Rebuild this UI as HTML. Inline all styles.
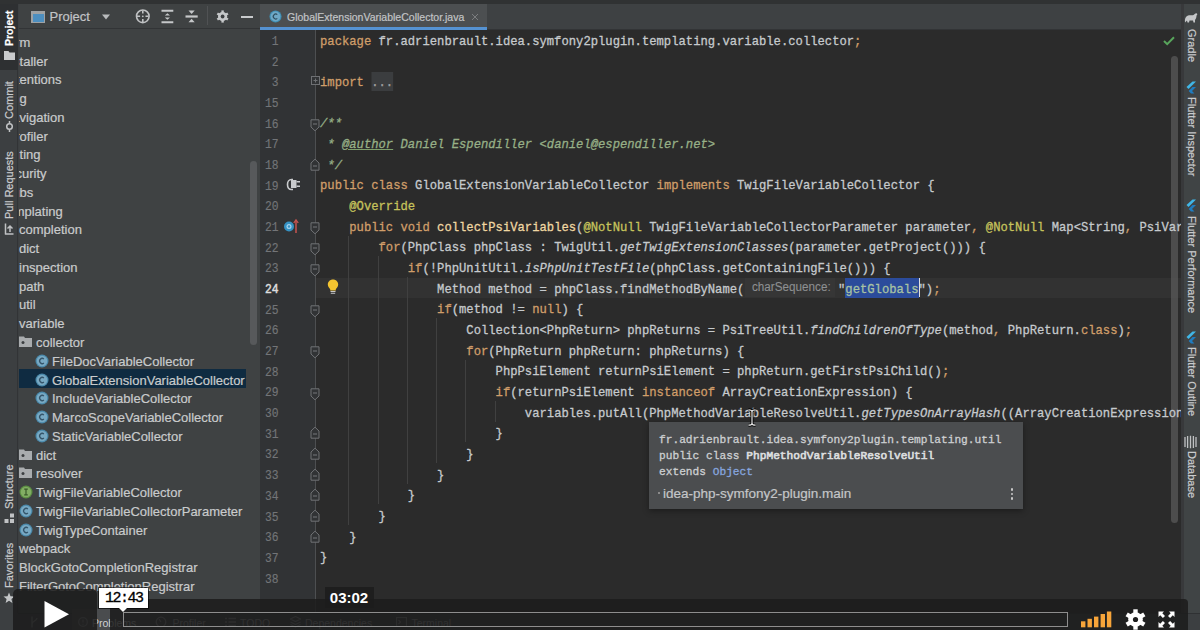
<!DOCTYPE html>
<html><head><meta charset="utf-8"><title>IDE video</title>
<style>
*{margin:0;padding:0;box-sizing:border-box}
html,body{width:1200px;height:630px;overflow:hidden;background:#3c3f41;font-family:"Liberation Sans",sans-serif;position:relative}
.abs{position:absolute}
#topstrip{position:absolute;left:0;top:0;width:1200px;height:4px;background:#303233}
#leftstrip{position:absolute;left:0;top:4px;width:18px;height:626px;background:#3c3f41;border-right:1px solid #323436}
#projtab{position:absolute;left:0;top:4px;width:18px;height:66px;background:#2e3032}
.vl{position:absolute;white-space:nowrap;font-size:11px;color:#c9cbcd;transform-origin:0 0;-webkit-text-stroke:0.2px currentColor}
.vl.up{transform:rotate(-90deg)}
.vl.down{transform:rotate(90deg)}
#projpanel{position:absolute;left:19px;top:4px;width:241px;height:626px;background:#3f4243;overflow:hidden}
#projhead{position:absolute;left:19px;top:4px;width:241px;height:25px;border-bottom:1px solid #323436}
.tt{position:absolute;font-size:13px;color:#c9cbcc;white-space:nowrap;line-height:16px;-webkit-text-stroke:0.2px currentColor}
.ti{position:absolute;line-height:0}
#treeclip{position:absolute;left:18.8px;top:30px;width:241px;height:600px;overflow:hidden}
#sel{position:absolute;left:19px;top:369px;width:227px;height:19.4px;background:#0f2b41}
#projscroll{position:absolute;left:249.5px;top:161px;width:7px;height:184px;border-radius:3.5px;background:#57595b}
#tabbar{position:absolute;left:260px;top:4px;width:921px;height:26px;background:#3e4143;border-bottom:1px solid #323436}
#tab{position:absolute;left:260px;top:4px;width:227px;height:26px;background:#4c4f51}
#tabline{position:absolute;left:260px;top:26.5px;width:227px;height:3px;background:#5592d2}
#gutter{position:absolute;left:260px;top:30px;width:55px;height:600px;background:#313335}
#gline{position:absolute;left:314.5px;top:30px;width:1px;height:600px;background:#4d4f51}
#editor{position:absolute;left:315px;top:30px;width:866px;height:600px;background:#2b2b2b;overflow:hidden}
#curline{position:absolute;left:260px;top:277.5px;width:921px;height:20.7px;background:#323232}
#curline2{position:absolute;left:260px;top:277.5px;width:55px;height:20.7px;background:#313335}
.ln{position:absolute;left:238px;width:40.5px;text-align:right;font-family:"Liberation Mono",monospace;font-size:13px;line-height:20.67px;color:#737578;white-space:nowrap;margin-top:3.1px;transform:scaleX(0.87);transform-origin:100% 0;-webkit-text-stroke:0.15px currentColor}
.ln.cur{color:#dcdcdc;-webkit-text-stroke:0.5px currentColor}
#codeclip{position:absolute;left:315px;top:30px;width:866px;height:600px;overflow:hidden}
.cl{position:absolute;font-family:"Liberation Mono",monospace;font-size:13.5px;line-height:20.67px;white-space:pre;color:#bfc4c9;transform:scaleX(0.9031);transform-origin:0 0;margin-top:2.5px;-webkit-text-stroke:0.3px currentColor}
.fold{background:#3b3d3f;color:#a0a0a0;padding:2.5px 0 1.5px 0}
.hint{display:inline-block;font-family:"Liberation Sans",sans-serif;font-size:11.6px;color:#7f8184;background:#3b3b3b;width:100.7px;padding-left:10px;height:18px;line-height:18px;vertical-align:top;margin-top:1.5px;box-shadow:inset 4px 0 0 #2b2b2b}
.sel{background:#214283;color:#a9b7c6}
.caret{display:inline-block;width:1px;height:16px;background:#bbbbbb;vertical-align:top;margin-top:2px;margin-right:-1px}
.guide{position:absolute;width:1px;background:#404040}
.fm{position:absolute;left:310px;line-height:0}
#rstrip{position:absolute;left:1181px;top:4px;width:19px;height:626px;background:#404445;border-left:3px solid #38393b}
#escroll{position:absolute;left:1170.5px;top:56px;width:7.5px;height:467px;border-radius:4px;background:rgba(90,90,90,.75)}
#popup{position:absolute;left:649px;top:422px;width:374px;height:87px;background:#4b4d4f;box-shadow:0 2px 6px rgba(0,0,0,.35)}
.pm{position:absolute;font-family:"Liberation Mono",monospace;font-size:11.2px;white-space:pre;color:#cdcfd1;-webkit-text-stroke:0.3px currentColor}
.pm b{font-weight:normal;-webkit-text-stroke:0.65px currentColor;color:#dcdedf}
/* video controls */
#play{position:absolute;left:12.5px;top:589px;width:84px;height:50px;border-radius:5px;background:rgba(28,28,28,.88)}
.sb{position:absolute;top:615.5px;font-size:10.5px;line-height:14px;color:#a4a6a8;white-space:nowrap}
#bar{position:absolute;left:110px;top:599px;width:1078px;height:40px;border-radius:4px;background:rgba(28,28,28,.86)}
#prog{position:absolute;left:122.5px;top:612px;width:945px;height:15px;border:1.5px solid #8e8e8e}
#tip{position:absolute;left:98.5px;top:587.5px;width:49.5px;height:20.5px;background:#fff;color:#000;font-family:"Liberation Mono",monospace;font-size:15px;letter-spacing:-1.5px;padding-left:1px;-webkit-text-stroke:0.3px #000;text-align:center;line-height:21px;box-shadow:0 0 0 1px rgba(0,0,0,.6)}
#tiparrow{position:absolute;left:119px;top:607.5px;width:0;height:0;border-left:4.2px solid transparent;border-right:4.2px solid transparent;border-top:4.5px solid #fff}
#tip2{position:absolute;left:324.5px;top:587px;width:49px;height:21px;background:rgba(28,28,28,.8);color:#fff;font-size:15px;font-weight:bold;text-align:center;line-height:21px}

</style></head><body>
<div id="topstrip"></div>
<div id="projpanel"></div>
<div id="leftstrip"></div>
<div id="projtab"></div>
<div class="vl up" style="left:2.5px;top:46px;font-weight:bold;color:#ffffff;font-size:10.5px">Project</div>
<div class="vl up" style="left:3px;top:118.5px">Commit</div>
<div class="vl up" style="left:3px;top:219px">Pull Requests</div>
<div class="vl up" style="left:3px;top:509px">Structure</div>
<div class="vl up" style="left:3px;top:588px">Favorites</div>
<div id="projhead"></div>
<div class="abs" style="left:31px;top:11px;width:14px;height:12px;background:#9fa2a4"></div>
<div class="abs" style="left:32.5px;top:14px;width:11px;height:7.5px;background:#4d8fc0"></div>
<div class="tt" style="left:49.5px;top:8.5px;font-size:13px;color:#c2c4c6">Project</div>
<div id="sel"></div>
<div id="treeclip">
<div class="tt" style="left:-14.37px;top:4.8px">form</div>
<div class="tt" style="left:-15.82px;top:23.6px">installer</div>
<div class="tt" style="left:-12.93px;top:42.3px">intentions</div>
<div class="tt" style="left:-16.55px;top:61.1px">lang</div>
<div class="tt" style="left:-13.66px;top:79.8px">navigation</div>
<div class="tt" style="left:-10.76px;top:98.6px">profiler</div>
<div class="tt" style="left:-17.99px;top:117.4px">routing</div>
<div class="tt" style="left:-17.03px;top:136.1px">security</div>
<div class="tt" style="left:-16.54px;top:154.9px">stubs</div>
<div class="tt" style="left:-15.97px;top:173.6px">templating</div>
</div>
<div class="tt" style="left:19px;top:222.4px">completion</div>
<div class="tt" style="left:19px;top:241.2px">dict</div>
<div class="tt" style="left:19px;top:259.9px">inspection</div>
<div class="tt" style="left:19px;top:278.7px">path</div>
<div class="tt" style="left:19px;top:297.4px">util</div>
<div class="tt" style="left:19px;top:316.2px">variable</div>
<div class="ti" style="left:19px;top:336.0px"><svg width="13" height="11" viewBox="0 0 13 11"><path d="M0 0.5 H5 L6 2 H13 V11 H0 Z" fill="#a9acae"/><circle cx="4" cy="6.5" r="1.5" fill="#3c3f41"/></svg></div>
<div class="tt" style="left:36px;top:335.0px">collector</div>
<div class="ti" style="left:35px;top:353.9px"><svg width="14" height="14" viewBox="0 0 14 14"><circle cx="7" cy="7" r="6.5" fill="#4a89aa"/><circle cx="7" cy="7" r="5.3" fill="#78a9c3"/><path d="M8.9 5.0 A2.6 2.6 0 1 0 8.9 9.0" fill="none" stroke="#35556a" stroke-width="1.3"/></svg></div>
<div class="tt" style="left:52px;top:353.7px">FileDocVariableCollector</div>
<div class="ti" style="left:35px;top:372.7px"><svg width="14" height="14" viewBox="0 0 14 14"><circle cx="7" cy="7" r="6.5" fill="#4a89aa"/><circle cx="7" cy="7" r="5.3" fill="#78a9c3"/><path d="M8.9 5.0 A2.6 2.6 0 1 0 8.9 9.0" fill="none" stroke="#35556a" stroke-width="1.3"/></svg></div>
<div class="tt" style="left:52px;top:372.5px">GlobalExtensionVariableCollector</div>
<div class="ti" style="left:35px;top:391.4px"><svg width="14" height="14" viewBox="0 0 14 14"><circle cx="7" cy="7" r="6.5" fill="#4a89aa"/><circle cx="7" cy="7" r="5.3" fill="#78a9c3"/><path d="M8.9 5.0 A2.6 2.6 0 1 0 8.9 9.0" fill="none" stroke="#35556a" stroke-width="1.3"/></svg></div>
<div class="tt" style="left:52px;top:391.2px">IncludeVariableCollector</div>
<div class="ti" style="left:35px;top:410.2px"><svg width="14" height="14" viewBox="0 0 14 14"><circle cx="7" cy="7" r="6.5" fill="#4a89aa"/><circle cx="7" cy="7" r="5.3" fill="#78a9c3"/><path d="M8.9 5.0 A2.6 2.6 0 1 0 8.9 9.0" fill="none" stroke="#35556a" stroke-width="1.3"/></svg></div>
<div class="tt" style="left:52px;top:410.0px">MarcoScopeVariableCollector</div>
<div class="ti" style="left:35px;top:429.0px"><svg width="14" height="14" viewBox="0 0 14 14"><circle cx="7" cy="7" r="6.5" fill="#4a89aa"/><circle cx="7" cy="7" r="5.3" fill="#78a9c3"/><path d="M8.9 5.0 A2.6 2.6 0 1 0 8.9 9.0" fill="none" stroke="#35556a" stroke-width="1.3"/></svg></div>
<div class="tt" style="left:52px;top:428.8px">StaticVariableCollector</div>
<div class="ti" style="left:19px;top:448.5px"><svg width="13" height="11" viewBox="0 0 13 11"><path d="M0 0.5 H5 L6 2 H13 V11 H0 Z" fill="#a9acae"/><circle cx="4" cy="6.5" r="1.5" fill="#3c3f41"/></svg></div>
<div class="tt" style="left:36px;top:447.5px">dict</div>
<div class="ti" style="left:19px;top:467.3px"><svg width="13" height="11" viewBox="0 0 13 11"><path d="M0 0.5 H5 L6 2 H13 V11 H0 Z" fill="#a9acae"/><circle cx="4" cy="6.5" r="1.5" fill="#3c3f41"/></svg></div>
<div class="tt" style="left:36px;top:466.3px">resolver</div>
<div class="ti" style="left:19px;top:485.2px"><svg width="14" height="14" viewBox="0 0 14 14"><circle cx="7" cy="7" r="6.5" fill="#5b8e42"/><circle cx="7" cy="7" r="5.3" fill="#82ad64"/><path d="M5.2 4.2 H8.8 M7 4.2 V9.8 M5.2 9.8 H8.8" stroke="#3a5a2a" stroke-width="1.2"/></svg></div>
<div class="tt" style="left:36px;top:485.0px">TwigFileVariableCollector</div>
<div class="ti" style="left:19px;top:504.0px"><svg width="14" height="14" viewBox="0 0 14 14"><circle cx="7" cy="7" r="6.5" fill="#4a89aa"/><circle cx="7" cy="7" r="5.3" fill="#78a9c3"/><path d="M8.9 5.0 A2.6 2.6 0 1 0 8.9 9.0" fill="none" stroke="#35556a" stroke-width="1.3"/></svg></div>
<div class="tt" style="left:36px;top:503.8px">TwigFileVariableCollectorParameter</div>
<div class="ti" style="left:19px;top:522.8px"><svg width="14" height="14" viewBox="0 0 14 14"><circle cx="7" cy="7" r="6.5" fill="#4a89aa"/><circle cx="7" cy="7" r="5.3" fill="#78a9c3"/><path d="M8.9 5.0 A2.6 2.6 0 1 0 8.9 9.0" fill="none" stroke="#35556a" stroke-width="1.3"/></svg></div>
<div class="tt" style="left:36px;top:522.6px">TwigTypeContainer</div>
<div class="tt" style="left:19px;top:541.3px">webpack</div>
<div class="tt" style="left:19px;top:560.1px">BlockGotoCompletionRegistrar</div>
<div class="tt" style="left:19px;top:578.8px">FilterGotoCompletionRegistrar</div>
<div id="projscroll"></div>
<div id="tabbar"></div>
<div id="tab"></div>
<div id="tabline"></div>
<div class="abs" style="left:268.5px;top:9.5px;line-height:0"><svg width="13" height="13" viewBox="0 0 14 14"><circle cx="7" cy="7" r="6.5" fill="#3d8fb5"/><circle cx="7" cy="7" r="5.3" fill="#6fa8c6"/><path d="M8.9 5.0 A2.6 2.6 0 1 0 8.9 9.0" fill="none" stroke="#2f4f60" stroke-width="1.3"/></svg></div>
<div class="tt" style="left:287px;top:9px;font-size:10.5px;color:#c2c4c6">GlobalExtensionVariableCollector.java</div>
<div id="gutter"></div>
<div id="editor"></div>
<div id="curline"></div>
<div id="curline2"></div>
<div id="gline"></div>
<div class="ln" style="top:29.00px">1</div>
<div class="ln" style="top:49.67px">2</div>
<div class="ln" style="top:70.34px">3</div>
<div class="ln" style="top:91.01px">15</div>
<div class="ln" style="top:111.68px">16</div>
<div class="ln" style="top:132.35px">17</div>
<div class="ln" style="top:153.02px">18</div>
<div class="ln" style="top:173.69px">19</div>
<div class="ln" style="top:194.36px">20</div>
<div class="ln" style="top:215.03px">21</div>
<div class="ln" style="top:235.70px">22</div>
<div class="ln" style="top:256.37px">23</div>
<div class="ln cur" style="top:277.04px">24</div>
<div class="ln" style="top:297.71px">25</div>
<div class="ln" style="top:318.38px">26</div>
<div class="ln" style="top:339.05px">27</div>
<div class="ln" style="top:359.72px">28</div>
<div class="ln" style="top:380.39px">29</div>
<div class="ln" style="top:401.06px">30</div>
<div class="ln" style="top:421.73px">31</div>
<div class="ln" style="top:442.40px">32</div>
<div class="ln" style="top:463.07px">33</div>
<div class="ln" style="top:483.74px">34</div>
<div class="ln" style="top:504.41px">35</div>
<div class="ln" style="top:525.08px">36</div>
<div class="ln" style="top:545.75px">37</div>
<div class="ln" style="top:566.42px">38</div>
<div class="guide" style="left:348.2px;top:235.7px;height:289.4px"></div>
<div class="guide" style="left:377.5px;top:256.4px;height:248.0px"></div>
<div class="guide" style="left:406.7px;top:277.0px;height:206.7px"></div>
<div class="guide" style="left:436.0px;top:318.4px;height:144.7px"></div>
<div class="guide" style="left:465.2px;top:359.7px;height:82.7px"></div>
<div class="guide" style="left:494.5px;top:401.1px;height:20.7px"></div>
<div class="abs" style="left:845px;top:277.5px;width:73.5px;height:20px;background:#2b4b9b"></div>
<div id="escroll"></div>
<div id="codeclip">
<div class="cl" style="left:5.45px;top:-1.00px"><span style="color:#d09e6a;">package </span><span style="color:#c6cacd;">fr.adrienbrault.idea.symfony2plugin.templating.variable.collector</span><span style="color:#d09e6a;">;</span></div>
<div class="cl" style="left:5.45px;top:19.67px"></div>
<div class="cl" style="left:5.45px;top:40.34px"><span style="color:#d09e6a;">import</span><span style="color:#c6cacd;"> </span><span class="fold">...</span></div>
<div class="cl" style="left:5.45px;top:61.01px"></div>
<div class="cl" style="left:5.45px;top:81.68px"><span style="color:#97b087;font-style:italic;">/**</span></div>
<div class="cl" style="left:5.45px;top:102.35px"><span style="color:#97b087;font-style:italic;"> * </span><span style="color:#97b087;font-style:italic;text-decoration:underline;text-decoration-color:#7fa06c;">@author</span><span style="color:#97b087;font-style:italic;"> Daniel Espendiller </span><span style="color:#97b087;font-style:italic;">&lt;daniel@espendiller.net&gt;</span></div>
<div class="cl" style="left:5.45px;top:123.02px"><span style="color:#97b087;font-style:italic;"> */</span></div>
<div class="cl" style="left:5.45px;top:143.69px"><span style="color:#d09e6a;">public class </span><span style="color:#c6cacd;">GlobalExtensionVariableCollector </span><span style="color:#d09e6a;">implements </span><span style="color:#c6cacd;">TwigFileVariableCollector {</span></div>
<div class="cl" style="left:5.45px;top:164.36px"><span style="color:#c6cacd;">    </span><span style="color:#c6c35c;">@Override</span></div>
<div class="cl" style="left:5.45px;top:185.03px"><span style="color:#c6cacd;">    </span><span style="color:#d09e6a;">public void </span><span style="color:#f0d7a2;">collectPsiVariables</span><span style="color:#c6cacd;">(</span><span style="color:#c6c35c;">@NotNull </span><span style="color:#c6cacd;">TwigFileVariableCollectorParameter parameter</span><span style="color:#d09e6a;">, </span><span style="color:#c6c35c;">@NotNull </span><span style="color:#c6cacd;">Map&lt;String</span><span style="color:#d09e6a;">, </span><span style="color:#c6cacd;">PsiVariable&gt; variables) {</span></div>
<div class="cl" style="left:5.45px;top:205.70px"><span style="color:#c6cacd;">        </span><span style="color:#d09e6a;">for</span><span style="color:#c6cacd;">(PhpClass phpClass : TwigUtil.</span><span style="color:#c6cacd;font-style:italic;">getTwigExtensionClasses</span><span style="color:#c6cacd;">(parameter.getProject())) {</span></div>
<div class="cl" style="left:5.45px;top:226.37px"><span style="color:#c6cacd;">            </span><span style="color:#d09e6a;">if</span><span style="color:#c6cacd;">(!PhpUnitUtil.</span><span style="color:#c6cacd;font-style:italic;">isPhpUnitTestFile</span><span style="color:#c6cacd;">(phpClass.getContainingFile())) {</span></div>
<div class="cl" style="left:5.45px;top:247.04px"><span style="color:#c6cacd;">                </span><span style="color:#c6cacd;">Method method = phpClass.findMethodByName(</span></div>
<div class="cl" style="left:522.60px;top:247.04px"><span style="color:#c6cacd;">&quot;</span><span style="color:#a8c2a3;">getGlobals</span><span style="color:#c6cacd;">&quot;</span><span style="color:#c6cacd;">)</span><span style="color:#d09e6a;">;</span></div>
<div class="cl" style="left:5.45px;top:267.71px"><span style="color:#c6cacd;">                </span><span style="color:#d09e6a;">if</span><span style="color:#c6cacd;">(method != </span><span style="color:#d09e6a;">null</span><span style="color:#c6cacd;">) {</span></div>
<div class="cl" style="left:5.45px;top:288.38px"><span style="color:#c6cacd;">                    </span><span style="color:#c6cacd;">Collection&lt;PhpReturn&gt; phpReturns = PsiTreeUtil.</span><span style="color:#c6cacd;font-style:italic;">findChildrenOfType</span><span style="color:#c6cacd;">(method</span><span style="color:#d09e6a;">, </span><span style="color:#c6cacd;">PhpReturn.</span><span style="color:#d09e6a;">class</span><span style="color:#c6cacd;">)</span><span style="color:#d09e6a;">;</span></div>
<div class="cl" style="left:5.45px;top:309.05px"><span style="color:#c6cacd;">                    </span><span style="color:#d09e6a;">for</span><span style="color:#c6cacd;">(PhpReturn phpReturn: phpReturns) {</span></div>
<div class="cl" style="left:5.45px;top:329.72px"><span style="color:#c6cacd;">                        </span><span style="color:#c6cacd;">PhpPsiElement returnPsiElement = phpReturn.getFirstPsiChild()</span><span style="color:#d09e6a;">;</span></div>
<div class="cl" style="left:5.45px;top:350.39px"><span style="color:#c6cacd;">                        </span><span style="color:#d09e6a;">if</span><span style="color:#c6cacd;">(returnPsiElement </span><span style="color:#d09e6a;">instanceof </span><span style="color:#c6cacd;">ArrayCreationExpression) {</span></div>
<div class="cl" style="left:5.45px;top:371.06px"><span style="color:#c6cacd;">                            </span><span style="color:#c6cacd;">variables.putAll(PhpMethodVariableResolveUtil.</span><span style="color:#c6cacd;font-style:italic;">getTypesOnArrayHash</span><span style="color:#c6cacd;">((ArrayCreationExpression) returnPsiElement));</span></div>
<div class="cl" style="left:5.45px;top:391.73px"><span style="color:#c6cacd;">                        }</span></div>
<div class="cl" style="left:5.45px;top:412.40px"><span style="color:#c6cacd;">                    }</span></div>
<div class="cl" style="left:5.45px;top:433.07px"><span style="color:#c6cacd;">                }</span></div>
<div class="cl" style="left:5.45px;top:453.74px"><span style="color:#c6cacd;">            }</span></div>
<div class="cl" style="left:5.45px;top:474.41px"><span style="color:#c6cacd;">        }</span></div>
<div class="cl" style="left:5.45px;top:495.08px"><span style="color:#c6cacd;">    }</span></div>
<div class="cl" style="left:5.45px;top:515.75px"><span style="color:#c6cacd;">}</span></div>
<div class="cl" style="left:5.45px;top:536.42px"></div>
</div>
<div class="fm" style="top:119.0px"><svg width="10" height="13" viewBox="0 0 10 13"><path d="M1 0.8 H9 V8 L5 11.8 L1 8 Z" fill="#313335" stroke="#707275" stroke-width="1"/><path d="M3 5 H7" stroke="#707275" stroke-width="1.1"/></svg></div>
<div class="fm" style="top:222.3px"><svg width="10" height="13" viewBox="0 0 10 13"><path d="M1 0.8 H9 V8 L5 11.8 L1 8 Z" fill="#313335" stroke="#707275" stroke-width="1"/><path d="M3 5 H7" stroke="#707275" stroke-width="1.1"/></svg></div>
<div class="fm" style="top:243.0px"><svg width="10" height="13" viewBox="0 0 10 13"><path d="M1 0.8 H9 V8 L5 11.8 L1 8 Z" fill="#313335" stroke="#707275" stroke-width="1"/><path d="M3 5 H7" stroke="#707275" stroke-width="1.1"/></svg></div>
<div class="fm" style="top:263.7px"><svg width="10" height="13" viewBox="0 0 10 13"><path d="M1 0.8 H9 V8 L5 11.8 L1 8 Z" fill="#313335" stroke="#707275" stroke-width="1"/><path d="M3 5 H7" stroke="#707275" stroke-width="1.1"/></svg></div>
<div class="fm" style="top:305.0px"><svg width="10" height="13" viewBox="0 0 10 13"><path d="M1 0.8 H9 V8 L5 11.8 L1 8 Z" fill="#313335" stroke="#707275" stroke-width="1"/><path d="M3 5 H7" stroke="#707275" stroke-width="1.1"/></svg></div>
<div class="fm" style="top:346.4px"><svg width="10" height="13" viewBox="0 0 10 13"><path d="M1 0.8 H9 V8 L5 11.8 L1 8 Z" fill="#313335" stroke="#707275" stroke-width="1"/><path d="M3 5 H7" stroke="#707275" stroke-width="1.1"/></svg></div>
<div class="fm" style="top:387.7px"><svg width="10" height="13" viewBox="0 0 10 13"><path d="M1 0.8 H9 V8 L5 11.8 L1 8 Z" fill="#313335" stroke="#707275" stroke-width="1"/><path d="M3 5 H7" stroke="#707275" stroke-width="1.1"/></svg></div>
<div class="fm" style="top:157.5px"><svg width="10" height="13" viewBox="0 0 10 13"><path d="M1 12.2 H9 V5 L5 1.2 L1 5 Z" fill="#313335" stroke="#707275" stroke-width="1"/><path d="M3 8 H7" stroke="#707275" stroke-width="1.1"/></svg></div>
<div class="fm" style="top:426.2px"><svg width="10" height="13" viewBox="0 0 10 13"><path d="M1 12.2 H9 V5 L5 1.2 L1 5 Z" fill="#313335" stroke="#707275" stroke-width="1"/><path d="M3 8 H7" stroke="#707275" stroke-width="1.1"/></svg></div>
<div class="fm" style="top:446.9px"><svg width="10" height="13" viewBox="0 0 10 13"><path d="M1 12.2 H9 V5 L5 1.2 L1 5 Z" fill="#313335" stroke="#707275" stroke-width="1"/><path d="M3 8 H7" stroke="#707275" stroke-width="1.1"/></svg></div>
<div class="fm" style="top:467.6px"><svg width="10" height="13" viewBox="0 0 10 13"><path d="M1 12.2 H9 V5 L5 1.2 L1 5 Z" fill="#313335" stroke="#707275" stroke-width="1"/><path d="M3 8 H7" stroke="#707275" stroke-width="1.1"/></svg></div>
<div class="fm" style="top:488.2px"><svg width="10" height="13" viewBox="0 0 10 13"><path d="M1 12.2 H9 V5 L5 1.2 L1 5 Z" fill="#313335" stroke="#707275" stroke-width="1"/><path d="M3 8 H7" stroke="#707275" stroke-width="1.1"/></svg></div>
<div class="fm" style="top:508.9px"><svg width="10" height="13" viewBox="0 0 10 13"><path d="M1 12.2 H9 V5 L5 1.2 L1 5 Z" fill="#313335" stroke="#707275" stroke-width="1"/><path d="M3 8 H7" stroke="#707275" stroke-width="1.1"/></svg></div>
<div class="fm" style="top:529.6px"><svg width="10" height="13" viewBox="0 0 10 13"><path d="M1 12.2 H9 V5 L5 1.2 L1 5 Z" fill="#313335" stroke="#707275" stroke-width="1"/><path d="M3 8 H7" stroke="#707275" stroke-width="1.1"/></svg></div>
<div class="fm" style="top:75.3px"><svg width="10" height="12" viewBox="0 0 10 12"><rect x="1.5" y="1.5" width="8" height="8" fill="#313335" stroke="#6e7073"/><path d="M3.5 5.5 H7.5 M5.5 3.5 V7.5" stroke="#6e7073"/></svg></div>
<div class="abs" style="left:745px;top:277.5px;width:90px;height:19.5px;background:#363636"></div>
<div class="tt" style="left:751.5px;top:278.5px;font-size:12.5px;color:#8d8f91;transform:scaleX(0.935);transform-origin:0 0;-webkit-text-stroke:0.1px currentColor">charSequence:</div>
<div class="abs" style="left:918.5px;top:278px;width:1.6px;height:18.5px;background:#e0e0e0"></div>
<div id="rstrip"></div>
<div class="vl down" style="left:1197.5px;top:29px">Gradle</div>
<div class="vl down" style="left:1197.5px;top:97px">Flutter Inspector</div>
<div class="vl down" style="left:1197.5px;top:215.5px">Flutter Performance</div>
<div class="vl down" style="left:1197.5px;top:347px">Flutter Outline</div>
<div class="vl down" style="left:1197.5px;top:451px">Database</div>
<div id="popup"></div>
<div class="pm" style="left:659px;top:433.5px">fr.adrienbrault.idea.symfony2plugin.templating.util</div>
<div class="pm" style="left:659px;top:449.5px">public class <b>PhpMethodVariableResolveUtil</b></div>
<div class="pm" style="left:659px;top:465.5px">extends <span style="color:#86a5de">Object</span></div>
<div class="tt" style="left:663px;top:485.5px;font-size:13.5px;color:#c4c6c8">idea-php-symfony2-plugin.main</div>

<!-- header icons -->
<svg class="abs" style="left:100px;top:13px" width="12" height="8" viewBox="0 0 12 8"><path d="M2 1.5 H10 L6 6.5 Z" fill="#b9bbbd"/></svg>
<svg class="abs" style="left:134px;top:8px" width="18" height="18" viewBox="0 0 18 18"><circle cx="8.8" cy="8.3" r="6.3" fill="none" stroke="#bfc1c3" stroke-width="1.6"/><path d="M8.8 2.5 V5.6 M8.8 11 V14.1 M3 8.3 H6.1 M11.5 8.3 H14.6" stroke="#bfc1c3" stroke-width="1.6"/><circle cx="8.8" cy="8.3" r="0.9" fill="#bfc1c3"/></svg>
<svg class="abs" style="left:160px;top:8px" width="15" height="17" viewBox="0 0 15 17"><path d="M1.5 2.8 H13.3 M1.5 14.2 H13.3" stroke="#c5c7c9" stroke-width="2"/><path d="M4.8 7.5 L7.4 5.2 L10 7.5 Z M4.8 9.5 L7.4 11.8 L10 9.5 Z" fill="#c5c7c9"/></svg>
<svg class="abs" style="left:184px;top:8px" width="15" height="17" viewBox="0 0 15 17"><path d="M1.5 8.5 H13.7" stroke="#c5c7c9" stroke-width="2.2"/><path d="M4.5 2.5 H10.7 L7.6 6 Z M4.5 14.2 H10.7 L7.6 10.8 Z" fill="#c5c7c9"/></svg>
<div class="abs" style="left:206.5px;top:6px;width:1px;height:19px;background:#505254"></div>
<svg class="abs" style="left:215px;top:9px" width="15" height="15" viewBox="0 0 15 15"><g fill="#c5c7c9"><circle cx="7.6" cy="7.5" r="4.6"/><path d="M6.4 1.4 h2.4 v3 h-2.4z" /><path d="M6.4 1.4 h2.4 v3 h-2.4z" transform="rotate(60 7.6 7.5)"/><path d="M6.4 1.4 h2.4 v3 h-2.4z" transform="rotate(120 7.6 7.5)"/><path d="M6.4 1.4 h2.4 v3 h-2.4z" transform="rotate(180 7.6 7.5)"/><path d="M6.4 1.4 h2.4 v3 h-2.4z" transform="rotate(240 7.6 7.5)"/><path d="M6.4 1.4 h2.4 v3 h-2.4z" transform="rotate(300 7.6 7.5)"/></g><circle cx="7.6" cy="7.5" r="1.9" fill="#3c3f41"/></svg>
<div class="abs" style="left:241px;top:15.5px;width:12px;height:2px;background:#c8cacc"></div>
<!-- tab close -->
<svg class="abs" style="left:471px;top:13px" width="8" height="8" viewBox="0 0 8 8"><path d="M1 1 L7 7 M7 1 L1 7" stroke="#7b7d7f" stroke-width="1"/></svg>
<!-- left strip icons -->
<svg class="abs" style="left:4px;top:51px" width="11" height="9" viewBox="0 0 11 9"><path d="M0 0 H4.5 L5.5 1.5 H11 V9 H0 Z" fill="#c9cbcd"/></svg>
<svg class="abs" style="left:3px;top:121px" width="13" height="11" viewBox="0 0 13 11"><circle cx="6.5" cy="5.5" r="2.8" fill="none" stroke="#c0c2c4" stroke-width="1.5"/><path d="M6.5 0 V2.5 M6.5 8.5 V11" stroke="#c0c2c4" stroke-width="1.5"/></svg>
<svg class="abs" style="left:4px;top:223px" width="11" height="12" viewBox="0 0 11 12"><path d="M1.5 0.5 V11.5 M1 11 H9.5 M6 3 V9 M3.5 5.5 L6 3 L8.5 5.5" fill="none" stroke="#bfc1c3" stroke-width="1.5"/></svg>
<svg class="abs" style="left:4px;top:513px" width="11" height="11" viewBox="0 0 11 11"><rect x="0.5" y="6" width="4" height="4" fill="#c0c2c4"/><rect x="6" y="6" width="4" height="4" fill="#c0c2c4"/><rect x="6" y="0.5" width="4" height="4" fill="#c0c2c4"/></svg>
<svg class="abs" style="left:3px;top:592px" width="12" height="12" viewBox="0 0 12 12"><path d="M6 0.5 L7.5 4.3 L11.5 4.5 L8.4 7 L9.4 11 L6 8.8 L2.6 11 L3.6 7 L0.5 4.5 L4.5 4.3 Z" fill="#c4c6c8"/></svg>
<!-- right strip icons -->
<svg class="abs" style="left:1184px;top:12px" width="14" height="12" viewBox="0 0 14 12"><path d="M1 10.5 C0.5 7 1.5 4.5 4 3.5 C6 2.8 8 3.5 9.5 3 C10.5 2.5 11 1 12.5 1.2 C13.5 1.5 13.5 3 12.5 3.5 C12.5 5 12 7 11 8 L11 10.5 L9.5 10.5 L9 8.5 L5.5 8.5 L5 10.5 L3.5 10.5 L3 8.5 Z" fill="#c4c6c8"/></svg>
<svg class="abs" style="left:1185px;top:81px" width="12" height="13" viewBox="0 0 12 13"><path d="M7.5 0.5 L11 0.5 L3.5 8 L1.5 6 Z" fill="#40b7e8"/><path d="M7.5 6 L11 6 L7 10 L5.3 8.3 Z M5.3 8.3 L7 10 L9.5 12.5 L6 12.5 L3.7 10 Z" fill="#1f7cc0"/></svg>
<svg class="abs" style="left:1185px;top:199px" width="12" height="13" viewBox="0 0 12 13"><path d="M7.5 0.5 L11 0.5 L3.5 8 L1.5 6 Z" fill="#40b7e8"/><path d="M7.5 6 L11 6 L7 10 L5.3 8.3 Z M5.3 8.3 L7 10 L9.5 12.5 L6 12.5 L3.7 10 Z" fill="#1f7cc0"/></svg>
<svg class="abs" style="left:1185px;top:331px" width="12" height="13" viewBox="0 0 12 13"><path d="M7.5 0.5 L11 0.5 L3.5 8 L1.5 6 Z" fill="#40b7e8"/><path d="M7.5 6 L11 6 L7 10 L5.3 8.3 Z M5.3 8.3 L7 10 L9.5 12.5 L6 12.5 L3.7 10 Z" fill="#1f7cc0"/></svg>
<svg class="abs" style="left:1184px;top:435px" width="13" height="14" viewBox="0 0 13 14"><g fill="none" stroke="#bfc1c3" stroke-width="1.3"><path d="M1 2 V12 M3.6 1 V13 M6.5 0.8 V13.2 M9.4 1 V13 M12 2 V12"/></g></svg>
<!-- green check -->
<svg class="abs" style="left:1163px;top:36px" width="12" height="10" viewBox="0 0 12 10"><path d="M1 5 L4.2 8.2 L11 1.2" fill="none" stroke="#58a55c" stroke-width="2"/></svg>
<!-- gutter icons -->
<svg class="abs" style="left:286px;top:176px" width="16" height="16" viewBox="0 0 16 16"><path d="M7 3.5 H5.5 C3 3.5 1.5 5.5 1.5 8.5 C1.5 11.5 3 13.5 5.5 13.5 H7" fill="none" stroke="#c9cbcd" stroke-width="1.6"/><rect x="5" y="4" width="5.5" height="8" fill="#c9cbcd"/><path d="M10.5 5.8 H14 M10.5 10.2 H14" stroke="#c9cbcd" stroke-width="1.6"/></svg>
<svg class="abs" style="left:283px;top:218px" width="16" height="16" viewBox="0 0 16 16"><circle cx="6" cy="8.5" r="5" fill="#3592c4"/><circle cx="6" cy="8.5" r="2.5" fill="#a9d5ef"/><circle cx="6" cy="8.5" r="1.3" fill="#3592c4"/><path d="M13 15 V3" stroke="#c75450" stroke-width="1.5"/><path d="M10.8 5 L13 1.8 L15.2 5" fill="none" stroke="#c75450" stroke-width="1.3"/></svg>
<svg class="abs" style="left:327px;top:279px" width="12" height="16" viewBox="0 0 12 16"><path d="M6 0.5 C9 0.5 11.2 2.7 11.2 5.5 C11.2 7.8 9.6 9 8.8 10.3 V11.5 H3.2 V10.3 C2.4 9 0.8 7.8 0.8 5.5 C0.8 2.7 3 0.5 6 0.5 Z" fill="#f4c430"/><path d="M3.5 12.5 H8.5 M3.8 14.2 H8.2" stroke="#c8c8c8" stroke-width="1.1"/></svg>
<!-- mouse I-beam -->
<svg class="abs" style="left:745.5px;top:407.5px" width="12" height="19" viewBox="0 0 12 19"><path d="M2.5 1.8 C4.5 1.8 6 2.6 6 3.8 C6 2.6 7.5 1.8 9.5 1.8 M6 3.8 V15.2 M2.5 17.2 C4.5 17.2 6 16.4 6 15.2 C6 16.4 7.5 17.2 9.5 17.2" fill="none" stroke="#000" stroke-width="3"/><path d="M2.5 1.8 C4.5 1.8 6 2.6 6 3.8 C6 2.6 7.5 1.8 9.5 1.8 M6 3.8 V15.2 M2.5 17.2 C4.5 17.2 6 16.4 6 15.2 C6 16.4 7.5 17.2 9.5 17.2" fill="none" stroke="#e8e8e8" stroke-width="1.2"/></svg>
<!-- popup extras -->
<div class="abs" style="left:1010.5px;top:488px;width:2.5px;height:2.5px;background:#c8c8c8;border-radius:1px"></div>
<div class="abs" style="left:1010.5px;top:492.5px;width:2.5px;height:2.5px;background:#c8c8c8;border-radius:1px"></div>
<div class="abs" style="left:1010.5px;top:497px;width:2.5px;height:2.5px;background:#c8c8c8;border-radius:1px"></div>
<div class="abs" style="left:657.5px;top:492px;width:2px;height:2px;background:#8a8a8a"></div>


<!-- IDE status bar under overlay -->
<div class="abs" style="left:0;top:613px;width:1200px;height:17px;background:#3c3f41;border-top:1px solid #2f3133"></div>
<div class="abs" style="left:0;top:613px;width:18px;height:17px;background:#3c3f41"></div>
<div class="abs" style="left:72px;top:609px;width:78px;height:21px;background:#4a4c4e"></div>
<div class="sb" style="left:92px;color:#d0d2d4;top:616.3px">Problems</div>
<div class="sb" style="left:172.5px">Profiler</div>
<div class="sb" style="left:240px">TODO</div>
<div class="sb" style="left:305px">Dependencies</div>
<div class="sb" style="left:411.5px">Terminal</div>
<svg class="abs" style="left:78px;top:617px" width="10" height="10" viewBox="0 0 10 10"><circle cx="5" cy="5" r="4.3" fill="none" stroke="#8a8c8e" stroke-width="1.3"/><path d="M5 2.5 V5.5 M5 6.8 V7.8" stroke="#8a8c8e" stroke-width="1.2"/></svg>
<svg class="abs" style="left:155px;top:616px" width="12" height="12" viewBox="0 0 12 12"><circle cx="6" cy="6" r="4.8" fill="none" stroke="#8a8c8e" stroke-width="1.3"/><path d="M6 6 L4 3" stroke="#8a8c8e" stroke-width="1.2"/></svg>
<svg class="abs" style="left:225px;top:617px" width="11" height="10" viewBox="0 0 11 10"><path d="M0 1.5 H2 M3.5 1.5 H11 M0 5 H2 M3.5 5 H11 M0 8.5 H2 M3.5 8.5 H11" stroke="#8a8c8e" stroke-width="1.3"/></svg>
<svg class="abs" style="left:289.5px;top:616px" width="11" height="12" viewBox="0 0 11 12"><path d="M5.5 0.5 L10.5 3 L5.5 5.5 L0.5 3 Z M0.5 6 L5.5 8.5 L10.5 6 M0.5 8.5 L5.5 11 L10.5 8.5" fill="none" stroke="#8a8c8e" stroke-width="1.2"/></svg>
<svg class="abs" style="left:396px;top:617px" width="11" height="10" viewBox="0 0 11 10"><rect x="0.5" y="0.5" width="10" height="9" fill="none" stroke="#8a8c8e" stroke-width="1.2"/><path d="M2.5 3 L4.5 5 L2.5 7" fill="none" stroke="#8a8c8e" stroke-width="1.1"/></svg>
<svg class="abs" style="left:30px;top:616px" width="9" height="12" viewBox="0 0 9 12"><path d="M2 0.5 V11.5 M2 8 C2 5 7 5 7 2" fill="none" stroke="#8a8c8e" stroke-width="1.3"/></svg>

<div id="play"></div>
<div id="bar"></div>
<div id="prog"></div>

<svg class="abs" style="left:44px;top:601px" width="26" height="27" viewBox="0 0 26 27"><path d="M0.5 0 L25 13.25 L0.5 26.5 Z" fill="#ffffff"/></svg>
<svg class="abs" style="left:1080px;top:610px" width="34" height="18" viewBox="0 0 34 18"><g fill="#f7a53a"><rect x="1" y="11.3" width="4.4" height="6"/><rect x="7.5" y="8.8" width="4.4" height="8.5"/><rect x="14" y="6.6" width="4.4" height="10.7"/><rect x="20.6" y="4" width="4.4" height="13.3"/><rect x="26.9" y="1.5" width="4.4" height="15.8"/></g></svg>
<svg class="abs" style="left:1124px;top:608px" width="23" height="23" viewBox="0 0 23 23"><g fill="#fff"><circle cx="11.5" cy="11.5" r="7.3"/><path d="M9.3 1.3 h4.4 v5 h-4.4z"/><path d="M9.3 1.3 h4.4 v5 h-4.4z" transform="rotate(60 11.5 11.5)"/><path d="M9.3 1.3 h4.4 v5 h-4.4z" transform="rotate(120 11.5 11.5)"/><path d="M9.3 1.3 h4.4 v5 h-4.4z" transform="rotate(180 11.5 11.5)"/><path d="M9.3 1.3 h4.4 v5 h-4.4z" transform="rotate(240 11.5 11.5)"/><path d="M9.3 1.3 h4.4 v5 h-4.4z" transform="rotate(300 11.5 11.5)"/></g><circle cx="11.5" cy="11.5" r="2.6" fill="#1d1d1d"/></svg>
<svg class="abs" style="left:1157px;top:610px" width="19" height="19" viewBox="0 0 19 19"><g fill="#fff"><path d="M1.5 1.5 H7 L5.3 3.2 L8 5.9 L5.9 8 L3.2 5.3 L1.5 7 Z"/><path d="M17.5 1.5 H12 L13.7 3.2 L11 5.9 L13.1 8 L15.8 5.3 L17.5 7 Z"/><path d="M1.5 17.5 H7 L5.3 15.8 L8 13.1 L5.9 11 L3.2 13.7 L1.5 12 Z"/><path d="M17.5 17.5 H12 L13.7 15.8 L11 13.1 L13.1 11 L15.8 13.7 L17.5 12 Z"/></g></svg>

<div id="tip">12:43</div>
<div id="tiparrow"></div>
<div id="tip2">03:02</div>

</body></html>
